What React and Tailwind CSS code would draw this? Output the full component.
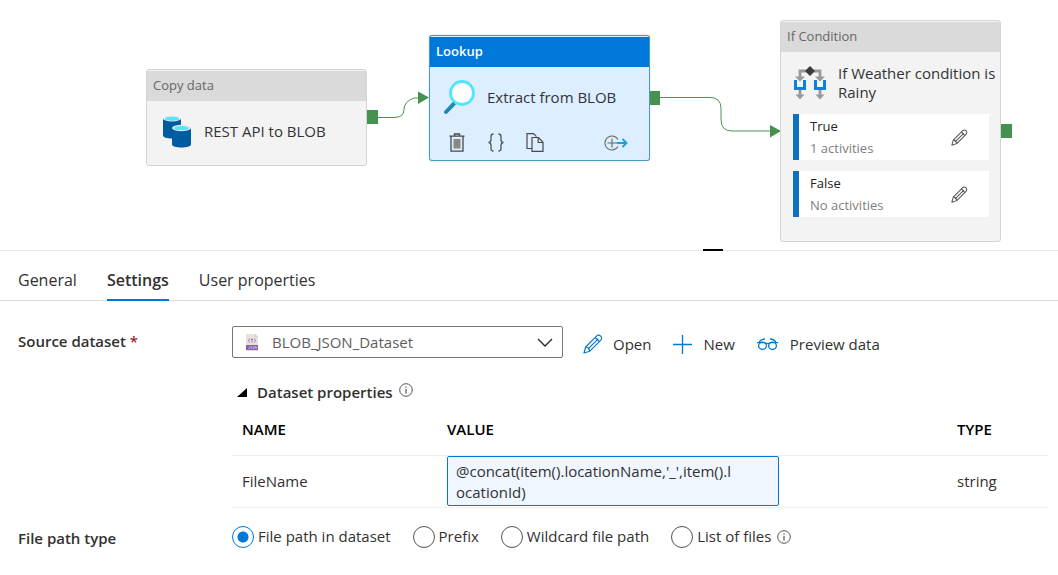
import { useState } from "react";
import clsx from "clsx";

const tabs = ["General", "Settings", "User properties"];

const pathTypes = ["File path in dataset", "Prefix", "Wildcard file path", "List of files"];

function CopyDataIcon() {
  return (
    <svg className="h-[33px] w-[30px] shrink-0" viewBox="0 0 30 33">
      <path fill="#005ba1" d="M1 3.500h18v17c0 1.700-4 3-9 3s-9-1.300-9-3z" />
      <ellipse cx="10" cy="3.500" rx="9" ry="3" fill="#e8e8e8" />
      <ellipse cx="10" cy="3.700" rx="7" ry="2" fill="#50e6ff" />
      <path fill="#005ba1" d="M10 13h19v16.500c0 1.700-4.200 3.100-9.500 3.100s-9.500-1.400-9.500-3.100z" />
      <ellipse cx="19.500" cy="13" rx="9.500" ry="3.200" fill="#e8e8e8" />
      <ellipse cx="19.500" cy="13.200" rx="7.500" ry="2.100" fill="#50e6ff" />
    </svg>
  );
}

function LookupIcon() {
  return (
    <svg className="h-9 w-8 shrink-0" viewBox="0 0 32 36" fill="none">
      <path d="M11.500 24L3 33" stroke="#198ab3" strokeWidth="4" strokeLinecap="round" />
      <circle cx="19" cy="14" r="11.500" fill="#fff" stroke="#50e6ff" strokeWidth="2.800" />
    </svg>
  );
}

function ConditionIcon() {
  return (
    <svg className="h-[34px] w-[34px] shrink-0" viewBox="0 0 34 34" fill="none">
      <path d="M7 11V5h20v6M7 24v6M27 24v6" stroke="#999" strokeWidth="2.800" />
      <path fill="#999" d="M2 10.500h10L7 15.500zM22 10.500h10L27 15.500zM2.500 28.500h9L7 33.500zM22.500 28.500h9L27 33.500z" />
      <path d="M2.500 14v8.500h9V14M22.500 14v8.500h9V14" stroke="#0f80dc" strokeWidth="3" />
      <path fill="#3c3c3c" d="M17 0l5 5-5 5-5-5z" />
    </svg>
  );
}

function PencilIcon({ className }) {
  return (
    <svg className={className} viewBox="0 0 20 20" fill="none" stroke="currentColor" strokeWidth="1.200" strokeLinejoin="round">
      <path d="M1 19l1.700-6L13.500 2.200c1.300-1.300 3-1.300 4.200-.1s1.200 2.900-.1 4.200L6.800 17.200z" />
      <path d="M2.700 13c2 .2 3.700 1.900 4.100 4.200M4.800 15.200L15.200 4.800M12.200 3.500l4.200 4.200" />
    </svg>
  );
}

function TrashIcon() {
  return (
    <svg className="h-[19px] w-4" viewBox="0 0 16 19" fill="none" stroke="#4a4a4a" strokeWidth="1.300">
      <path d="M.5 3.200h15M5.500 3V1h5v2M2 3.500v14.700h12V3.500" />
      <path fill="#888" stroke="none" d="M4.500 6h7v9.500h-7z" />
    </svg>
  );
}

function BracesIcon() {
  return (
    <svg className="h-[19px] w-4" viewBox="0 0 16 19" fill="none" stroke="#555" strokeWidth="1.300">
      <path d="M5.500 1C3.500 1 3 1.800 3 3.500v3C3 8.500 2.300 9.500.5 9.500 2.300 9.500 3 10.500 3 12.500v3C3 17.200 3.500 18 5.500 18M10.500 1c2 0 2.500.8 2.500 2.500v3c0 2 .7 3 2.500 3-1.800 0-2.500 1-2.500 3v3c0 1.700-.5 2.500-2.500 2.500" />
    </svg>
  );
}

function CopyIcon() {
  return (
    <svg className="h-[19px] w-[18px]" viewBox="0 0 18 19" fill="none" stroke="#4a4a4a" strokeWidth="1.200">
      <path d="M5.500 15.500H1V.7h6.500l3 3M6 4.500h6.500l4.500 4.800v9H6z" />
      <path d="M12.200 4.700v4.800H17" />
    </svg>
  );
}

function AddOutputIcon() {
  return (
    <svg className="h-4 w-6" viewBox="0 0 24 16" fill="none">
      <path d="M14 4.500A7 7 0 1 0 14 11.500" stroke="#666" strokeWidth="1.100" />
      <path d="M8 3.500v9M3.500 8h9" stroke="#666" strokeWidth="1.100" />
      <path d="M12.500 8h9M18.500 4l4 4-4 4" stroke="#1ba1d3" strokeWidth="1.900" />
    </svg>
  );
}

function JsonFileIcon() {
  return (
    <svg className="h-[17px] w-3 shrink-0" viewBox="0 0 12 17">
      <path fill="#e6e4da" d="M0 0h9l3 3v14H0z" />
      <path fill="#c9c6ba" d="M9 0l3 3H9z" />
      <path d="M3.800 4.500c-1 0-.3 1.800-1.300 2 1 .2.300 2 1.300 2M8.200 4.500c1 0 .3 1.800 1.300 2-1 .2-.3 2-1.300 2M6 4.500v4M5 5.500h2" fill="none" stroke="#8a5fb0" strokeWidth=".8" />
      <path fill="#8a5fb0" d="M0 11h12v5H0z" />
      <path d="M2 14.500h1.500v-2M5.500 12.500H4.700v1h1v1h-1M7 12.500h1.300v2H7zM9.500 14.500v-2l1.200 2v-2" fill="none" stroke="#e3d6ee" strokeWidth=".5" />
    </svg>
  );
}

function GlassesIcon() {
  return (
    <svg className="h-3.5 w-[21px]" viewBox="0 0 21 14" fill="none" stroke="#0078d4" strokeWidth="1.300">
      <ellipse cx="5.500" cy="8.700" rx="3.900" ry="3.600" />
      <ellipse cx="15.500" cy="8.700" rx="3.900" ry="3.600" />
      <path d="M0 5.700h7.500c1.500 1.200 4.500 1.200 6 0H21M2 5.500C3 3.200 5 2.200 8 2M19 5.500C18 3.200 16 2.200 13 2" />
    </svg>
  );
}

function InfoIcon() {
  return (
    <svg className="h-3.5 w-3.5 shrink-0" viewBox="0 0 14 14" fill="none" stroke="#444">
      <circle cx="7" cy="7" r="6.300" strokeWidth=".9" />
      <path d="M7 6v4.500M7 3.500v1.200" strokeWidth="1.100" />
    </svg>
  );
}

function Connections() {
  return (
    <svg className="absolute left-0 top-0 h-[250px] w-[1058px]" viewBox="0 0 1058 250" fill="none">
      <g stroke="#4b9353">
        <path d="M378 117.500h16q10 0 10-8t10-11.500h6" />
        <path d="M660 97.500h50q11 0 11 11v11q0 11.500 11 11.500h40" />
      </g>
      <g fill="#459150">
        <path d="M418 91.500l11 6-11 6.500zM770 125l11 6-11 6.500z" />
        <path d="M367 110h11v14h-11zM650 91h10v14h-10zM1001 124h11v14h-11z" />
      </g>
    </svg>
  );
}

function ActivityNode({ type, active, className, children }) {
  return (
    <div
      className={clsx(
        "absolute flex w-[221px] flex-col rounded-[3px] border pt-px",
        active ? "border-[#4a9cbe] bg-[#dceeff] shadow-[0_0_1px_#4a9cbe]" : "border-[#d4d4d4] bg-[#f3f3f3]",
        className
      )}
    >
      <div
        className={clsx(
          "flex h-[30px] shrink-0 items-center px-1.5 text-[13px]",
          active ? "bg-[#0078d9] font-semibold text-white" : "bg-[#dadada] text-[#666]"
        )}
      >
        {type}
      </div>
      {children}
    </div>
  );
}

function Branch({ name, detail }) {
  return (
    <div className="flex h-[46px] items-center border-l-6 border-[#1070c0] bg-white pl-[11px] pr-[21px] text-[13px]">
      <div className="flex-1 leading-[22px]">
        <div className="text-[#222]">{name}</div>
        <div className="text-[#808080]">{detail}</div>
      </div>
      <button type="button" aria-label={`Edit ${name}`} className="text-[#555]">
        <PencilIcon className="h-[17px] w-[17px]" />
      </button>
    </div>
  );
}

function Pipeline() {
  return (
    <div className="relative h-[250px] overflow-hidden">
      <Connections />
      <ActivityNode type="Copy data" className="left-[146px] top-[69px] h-[97px]">
        <div className="flex flex-1 items-center gap-3 pb-1 pl-[15px] text-[15px] text-[#333]">
          <CopyDataIcon />
          REST API to BLOB
        </div>
      </ActivityNode>
      <ActivityNode type="Lookup" active className="left-[429px] top-[35px] h-[126px]">
        <div className="flex items-center gap-3 pl-[13px] pt-3 text-[15px] text-[#333]">
          <LookupIcon />
          Extract from BLOB
        </div>
        <div className="mt-[18px] flex items-center pl-[19px] pr-[21px]">
          <button type="button" aria-label="Delete"><TrashIcon /></button>
          <button type="button" aria-label="View code" className="ml-[23px]"><BracesIcon /></button>
          <button type="button" aria-label="Clone" className="ml-[22px]"><CopyIcon /></button>
          <button type="button" aria-label="Add output" className="ml-auto"><AddOutputIcon /></button>
        </div>
      </ActivityNode>
      <ActivityNode type="If Condition" className="left-[780px] top-5 h-[222px]">
        <div className="flex h-[62px] items-center gap-[11px] pl-3 text-[15px] leading-[19px] text-[#333]">
          <ConditionIcon />
          <span>If Weather condition is Rainy</span>
        </div>
        <div className="flex flex-col gap-[11px] pl-3 pr-[11px]">
          <Branch name="True" detail="1 activities" />
          <Branch name="False" detail="No activities" />
        </div>
      </ActivityNode>
    </div>
  );
}

export default function App() {
  const [tab, setTab] = useState("Settings");
  const [pathType, setPathType] = useState(pathTypes[0]);
  const [fileName, setFileName] = useState("@concat(item().locationName,'_',item().locationId)");

  return (
    <div className="bg-white font-['Open_Sans','Noto_Sans',sans-serif] text-[15px] text-[#323130]">
      <Pipeline />

      <div className="relative border-t border-[#e9e9e9]">
        <div className="absolute left-[703px] top-[-2px] h-0.5 w-5 bg-black" />
        <nav className="flex gap-[30px] border-b border-[#ddd] px-[18px] text-base">
          {tabs.map((t) => (
            <button
              key={t}
              type="button"
              onClick={() => setTab(t)}
              className={clsx(
                "-mb-px flex h-[50px] items-center border-b-2 pt-2.5",
                tab === t ? "border-[#0078d4] font-semibold" : "border-transparent"
              )}
            >
              {t}
            </button>
          ))}
        </nav>
      </div>

      <form className="grid grid-cols-[214px_1fr] pl-[18px] pr-2.5 pt-[25px]">
        <label htmlFor="dataset" className="pt-[3px] font-semibold leading-6">
          Source dataset <span className="text-[#a4262c]">*</span>
        </label>
        <div>
          <div className="flex items-center gap-5">
            <div className="grid h-8 w-[331px] items-center rounded-xs border border-[#767676]">
              <div className="col-start-1 row-start-1 flex items-center justify-between pl-[13px] pr-[9px]">
                <JsonFileIcon />
                <svg className="h-[9px] w-4" viewBox="0 0 16 9" fill="none" stroke="#222" strokeWidth="1.300">
                  <path d="M1 1l7 7 7-7" />
                </svg>
              </div>
              <select id="dataset" className="col-start-1 row-start-1 h-full w-full appearance-none pl-[39px] text-[#605e5c]">
                <option>BLOB_JSON_Dataset</option>
              </select>
            </div>
            <div className="flex gap-[22px] pt-1">
              <button type="button" className="flex items-center gap-2.5">
                <PencilIcon className="h-5 w-5 text-[#0078d4]" />
                Open
              </button>
              <button type="button" className="flex items-center gap-[11px]">
                <svg className="h-[19px] w-[19px]" viewBox="0 0 19 19" stroke="#0078d4" strokeWidth="1.300">
                  <path d="M9.500 0v19M0 9.500h19" />
                </svg>
                New
              </button>
              <button type="button" className="flex items-center gap-3">
                <GlassesIcon />
                Preview data
              </button>
            </div>
          </div>

          <div className="mt-[22px] flex h-6 items-center gap-1.5 pl-[5px] font-semibold">
            <svg className="mr-1 h-[9px] w-2.5" viewBox="0 0 10 9">
              <path d="M10 0v9H0z" />
            </svg>
            Dataset properties
            <span className="pb-1"><InfoIcon /></span>
          </div>

          <table className="w-full table-fixed text-left">
            <thead>
              <tr className="h-[51px] border-b border-[#f0f0f0] text-black">
                <th className="w-[215px] pl-2.5 font-semibold">NAME</th>
                <th className="font-semibold">VALUE</th>
                <th className="w-[91px] font-semibold">TYPE</th>
              </tr>
            </thead>
            <tbody>
              <tr className="h-[52px] border-b border-[#f0f0f0]">
                <td className="pl-2.5">FileName</td>
                <td>
                  <textarea
                    aria-label="FileName value"
                    rows={2}
                    value={fileName}
                    onChange={(e) => setFileName(e.target.value)}
                    className="block h-[50px] w-[332px] resize-none overflow-hidden break-all rounded-xs border border-[#0078d4] bg-[#eff6ff] py-1 pl-2 pr-11 leading-[21px]"
                  />
                </td>
                <td>string</td>
              </tr>
            </tbody>
          </table>
        </div>

        <span id="path-type" className="mt-[18px] font-semibold leading-6">File path type</span>
        <div role="radiogroup" aria-labelledby="path-type" className="mt-[18px] flex h-[22px] items-center gap-[22px]">
          {pathTypes.map((p) => (
            <div key={p} className="flex items-center gap-1.5">
              <label className="flex items-center gap-1">
                <input
                  type="radio"
                  name="pathType"
                  checked={pathType === p}
                  onChange={() => setPathType(p)}
                  className="h-[22px] w-[22px] appearance-none rounded-full border border-[#555] checked:border-[#0078d4] checked:bg-[radial-gradient(#0078d4_5px,transparent_6px)]"
                />
                {p}
              </label>
              {p === "List of files" && <InfoIcon />}
            </div>
          ))}
        </div>
      </form>
    </div>
  );
}
